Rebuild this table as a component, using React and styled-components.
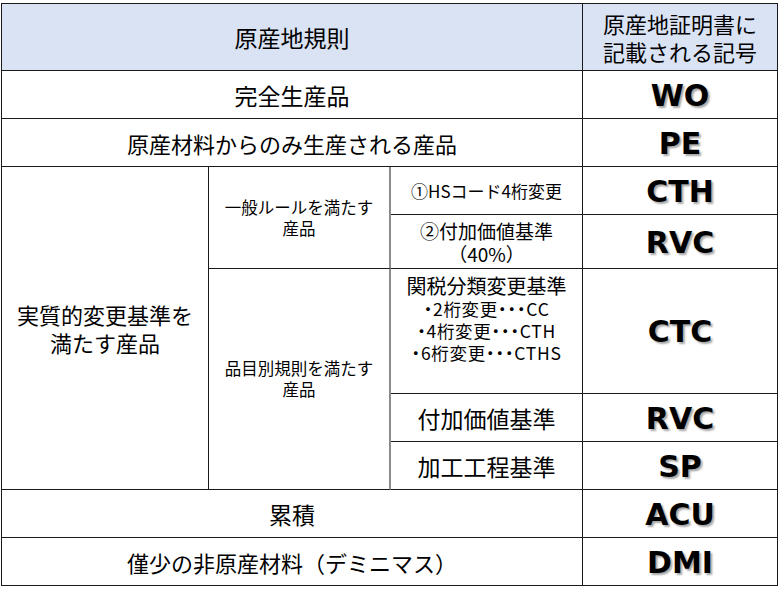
import React from "react";
import styled, { createGlobalStyle } from "styled-components";

const Global = createGlobalStyle`
  html, body { margin: 0; padding: 0; background: #fff; }
  body { font-family: "Noto Sans CJK JP", "Noto Sans", sans-serif; color: #000; }
`;

const Page = styled.div`
  padding: 3px 0 0 1px;
`;

const Grid = styled.div`
  display: grid;
  grid-template-columns: 207px 182px 192px 195px;
  grid-template-rows: 67px 48px 48px 48px 54px 125px 48px 48px 48px 48px;
  width: 777px;
  box-sizing: border-box;
  border-left: 1px solid #1a1a1a;
  border-top: 1px solid #1a1a1a;
`;

const Cell = styled.div`
  grid-column: ${(p) => p.$col};
  grid-row: ${(p) => p.$row};
  box-sizing: border-box;
  border-right: ${(p) => (p.$grayRight ? "2px solid #8c8c8c" : "1px solid #1a1a1a")};
  border-bottom: 1px solid #1a1a1a;
  background: ${(p) => (p.$head ? "#dae3f3" : "#fff")};
  display: flex;
  flex-direction: column;
  align-items: center;
  justify-content: ${(p) => (p.$top ? "flex-start" : "center")};
  padding-top: ${(p) => (p.$top ? "4px" : "0")};
  text-align: center;
  font-size: ${(p) => p.$size || 22}px;
  line-height: ${(p) => p.$lh || 28}px;
  white-space: nowrap;
`;

const Code = styled(Cell)`
  font-family: "DejaVu Sans", Verdana, sans-serif;
  font-weight: 700;
  font-size: 30px;
  line-height: 34px;
  padding-top: 2px;
  text-shadow: 2px 2px 2px rgba(0, 0, 0, 0.35);
`;

const Line = styled.span`
  display: block;
  font-size: ${(p) => (p.$size ? `${p.$size}px` : "inherit")};
  line-height: ${(p) => (p.$lh ? `${p.$lh}px` : "inherit")};
`;

const BulletLine = styled(Line)`
  font-feature-settings: "halt";
  letter-spacing: 0.04em;
`;

function Bullet({ digits, code }) {
  return (
    <BulletLine>
      ・{digits}桁変更・・・{code}
    </BulletLine>
  );
}

export default function App() {
  return (
    <>
      <Global />
      <Page>
        <Grid>
          <Cell $col="1 / 4" $row="1" $head $size={23}>原産地規則</Cell>
          <Cell $col="4" $row="1" $head $size={22} $lh={28}>
            <Line>原産地証明書に</Line>
            <Line>記載される記号</Line>
          </Cell>

          <Cell $col="1 / 4" $row="2" $size={23}>完全生産品</Cell>
          <Code $col="4" $row="2">WO</Code>

          <Cell $col="1 / 4" $row="3">原産材料からのみ生産される産品</Cell>
          <Code $col="4" $row="3">PE</Code>

          <Cell $col="1" $row="4 / 9" $lh={28}>
            <Line>実質的変更基準を</Line>
            <Line>満たす産品</Line>
          </Cell>

          <Cell $col="2" $row="4 / 6" $grayRight $size={16.5} $lh={21}>
            <Line>一般ルールを満たす</Line>
            <Line>産品</Line>
          </Cell>
          <Cell $col="3" $row="4" $size={17}>①HSコード4桁変更</Cell>
          <Code $col="4" $row="4">CTH</Code>

          <Cell $col="3" $row="5" $size={19} $lh={23}>
            <Line>②付加価値基準</Line>
            <Line>（40%）</Line>
          </Cell>
          <Code $col="4" $row="5">RVC</Code>

          <Cell $col="2" $row="6 / 9" $grayRight $size={16.5} $lh={21}>
            <Line>品目別規則を満たす</Line>
            <Line>産品</Line>
          </Cell>
          <Cell $col="3" $row="6" $top $size={17.5} $lh={22}>
            <Line $size={20} $lh={25}>関税分類変更基準</Line>
            <Bullet digits="2" code="CC" />
            <Bullet digits="4" code="CTH" />
            <Bullet digits="6" code="CTHS" />
          </Cell>
          <Code $col="4" $row="6">CTC</Code>

          <Cell $col="3" $row="7" $size={23}>付加価値基準</Cell>
          <Code $col="4" $row="7">RVC</Code>

          <Cell $col="3" $row="8" $size={23}>加工工程基準</Cell>
          <Code $col="4" $row="8">SP</Code>

          <Cell $col="1 / 4" $row="9" $size={23}>累積</Cell>
          <Code $col="4" $row="9">ACU</Code>

          <Cell $col="1 / 4" $row="10">僅少の非原産材料（デミニマス）</Cell>
          <Code $col="4" $row="10">DMI</Code>
        </Grid>
      </Page>
    </>
  );
}
